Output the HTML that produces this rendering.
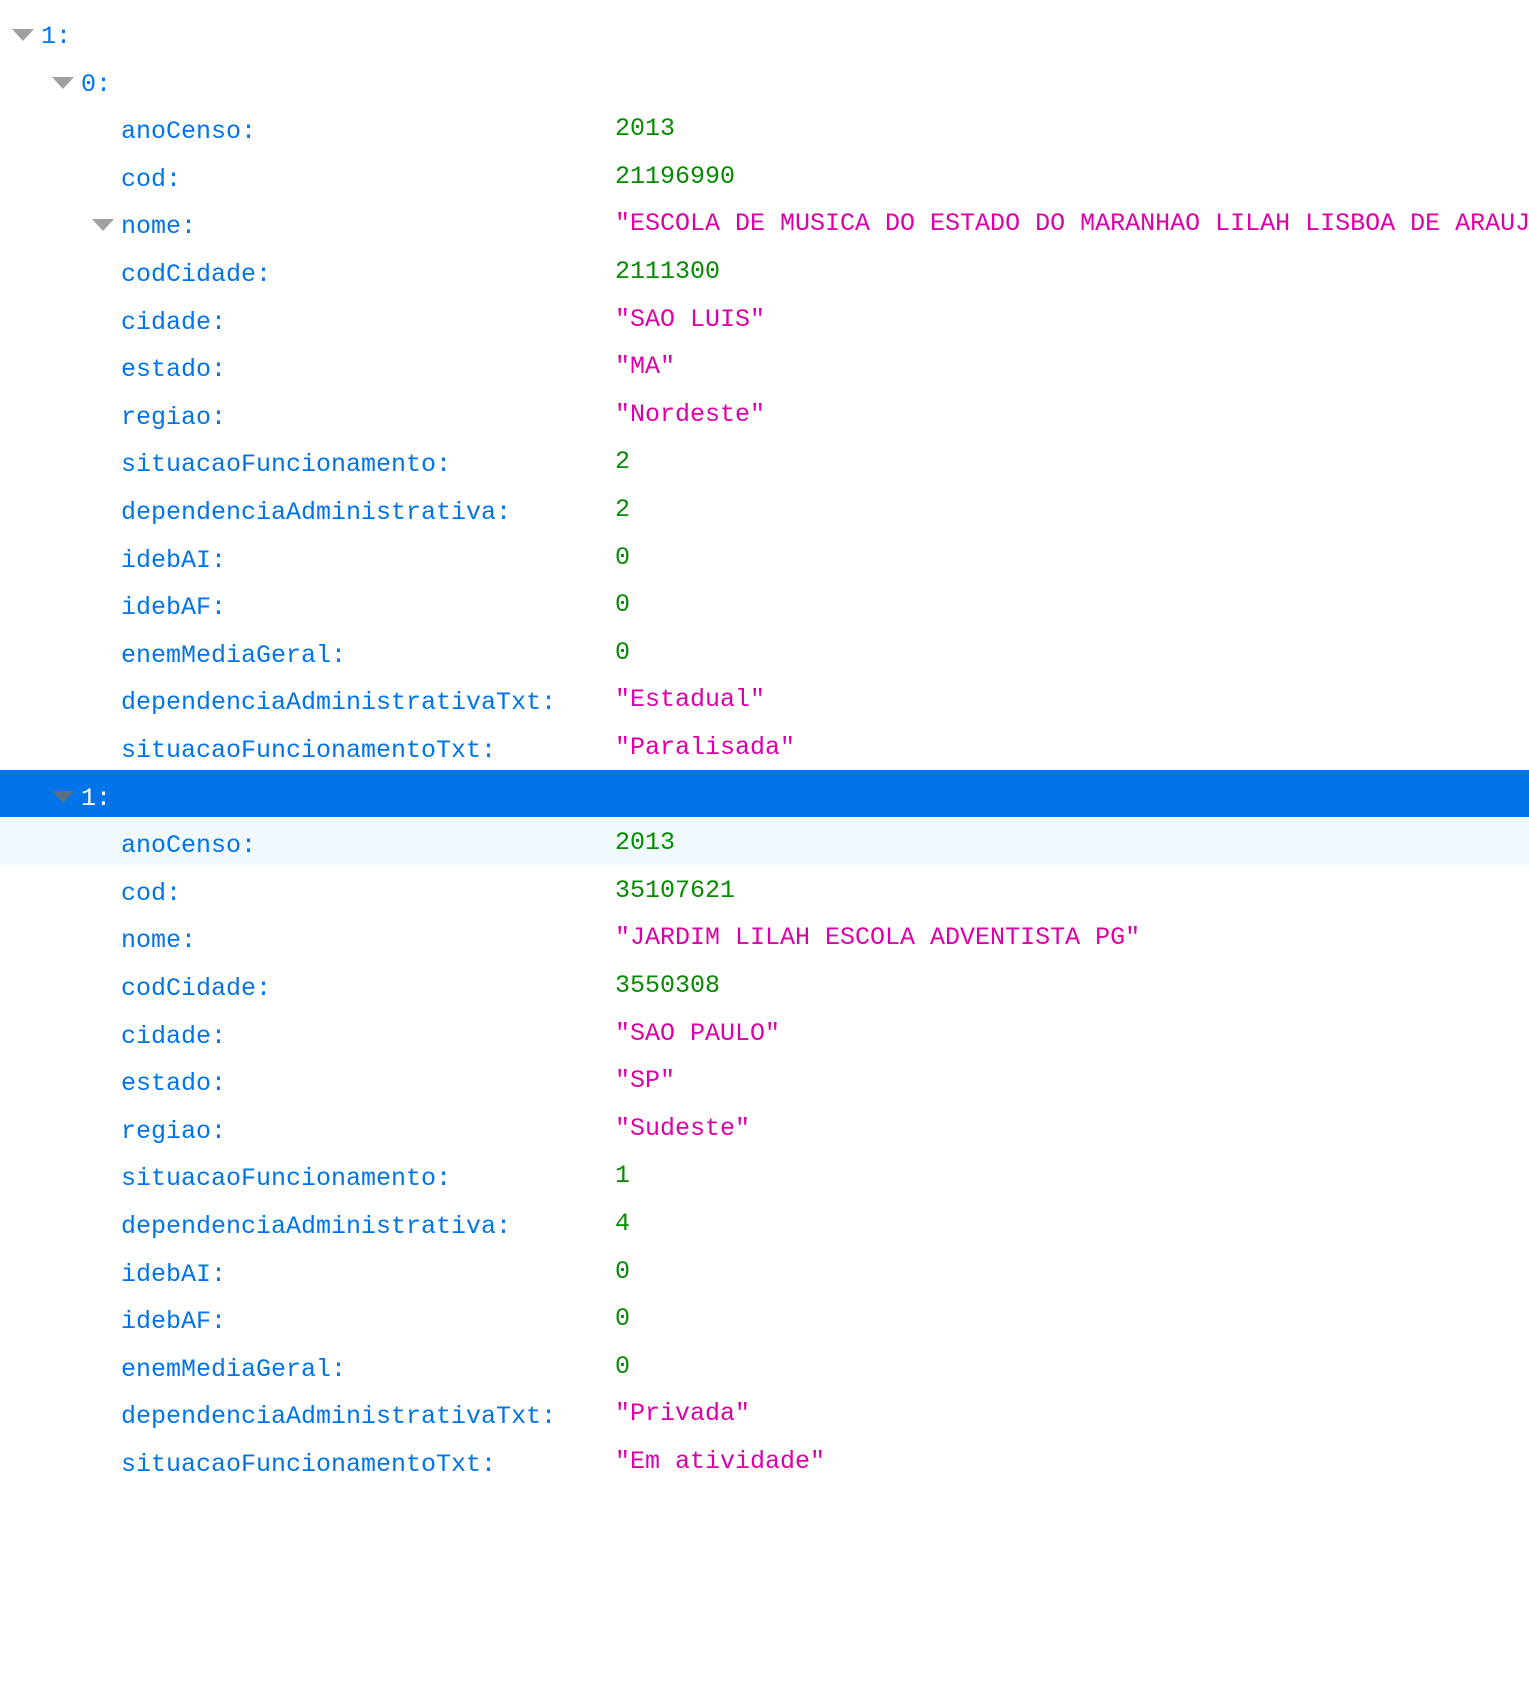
<!DOCTYPE html>
<html><head><meta charset="utf-8"><style>
html,body{margin:0;padding:0;background:#fff;width:1529px;height:1684px;overflow:hidden}
.r{position:absolute;left:0;width:1529px;height:47.6px;line-height:57px;font-family:"Liberation Mono",monospace;font-size:25px;white-space:nowrap;overflow:hidden}
.k{position:absolute;color:#0074e8}
.v{position:absolute;left:615px;top:-3px}
.n{color:#058b00}.s{color:#dd00a9}
.t{position:absolute;width:0;height:0;border-left:11px solid transparent;border-right:11px solid transparent;border-top:12px solid #a0a0a0;top:21px}
.sel{background:#0074e8}.sel .k{color:#fff}.sel .t{border-top-color:#5a7184}
.hov{background:#f0f9fe}
</style></head><body>
<div class="r" style="top:8px"><span class="t" style="left:12px"></span><span class="k" style="left:41px">1:</span></div>
<div class="r" style="top:55.6px"><span class="t" style="left:52px"></span><span class="k" style="left:81px">0:</span></div>
<div class="r" style="top:103.2px"><span class="k" style="left:121px">anoCenso:</span><span class="v n">2013</span></div>
<div class="r" style="top:150.8px"><span class="k" style="left:121px">cod:</span><span class="v n">21196990</span></div>
<div class="r" style="top:198.4px"><span class="t" style="left:92px"></span><span class="k" style="left:121px">nome:</span><span class="v s">"ESCOLA DE MUSICA DO ESTADO DO MARANHAO LILAH LISBOA DE ARAUJO"</span></div>
<div class="r" style="top:246px"><span class="k" style="left:121px">codCidade:</span><span class="v n">2111300</span></div>
<div class="r" style="top:293.6px"><span class="k" style="left:121px">cidade:</span><span class="v s">"SAO LUIS"</span></div>
<div class="r" style="top:341.2px"><span class="k" style="left:121px">estado:</span><span class="v s">"MA"</span></div>
<div class="r" style="top:388.8px"><span class="k" style="left:121px">regiao:</span><span class="v s">"Nordeste"</span></div>
<div class="r" style="top:436.4px"><span class="k" style="left:121px">situacaoFuncionamento:</span><span class="v n">2</span></div>
<div class="r" style="top:484px"><span class="k" style="left:121px">dependenciaAdministrativa:</span><span class="v n">2</span></div>
<div class="r" style="top:531.6px"><span class="k" style="left:121px">idebAI:</span><span class="v n">0</span></div>
<div class="r" style="top:579.2px"><span class="k" style="left:121px">idebAF:</span><span class="v n">0</span></div>
<div class="r" style="top:626.8px"><span class="k" style="left:121px">enemMediaGeral:</span><span class="v n">0</span></div>
<div class="r" style="top:674.4px"><span class="k" style="left:121px">dependenciaAdministrativaTxt:</span><span class="v s">"Estadual"</span></div>
<div class="r" style="top:722px"><span class="k" style="left:121px">situacaoFuncionamentoTxt:</span><span class="v s">"Paralisada"</span></div>
<div class="r sel" style="top:769.6px"><span class="t" style="left:52px"></span><span class="k" style="left:81px">1:</span></div>
<div class="r hov" style="top:817.2px"><span class="k" style="left:121px">anoCenso:</span><span class="v n">2013</span></div>
<div class="r" style="top:864.8px"><span class="k" style="left:121px">cod:</span><span class="v n">35107621</span></div>
<div class="r" style="top:912.4px"><span class="k" style="left:121px">nome:</span><span class="v s">"JARDIM LILAH ESCOLA ADVENTISTA PG"</span></div>
<div class="r" style="top:960px"><span class="k" style="left:121px">codCidade:</span><span class="v n">3550308</span></div>
<div class="r" style="top:1007.6px"><span class="k" style="left:121px">cidade:</span><span class="v s">"SAO PAULO"</span></div>
<div class="r" style="top:1055.2px"><span class="k" style="left:121px">estado:</span><span class="v s">"SP"</span></div>
<div class="r" style="top:1102.8px"><span class="k" style="left:121px">regiao:</span><span class="v s">"Sudeste"</span></div>
<div class="r" style="top:1150.4px"><span class="k" style="left:121px">situacaoFuncionamento:</span><span class="v n">1</span></div>
<div class="r" style="top:1198px"><span class="k" style="left:121px">dependenciaAdministrativa:</span><span class="v n">4</span></div>
<div class="r" style="top:1245.6px"><span class="k" style="left:121px">idebAI:</span><span class="v n">0</span></div>
<div class="r" style="top:1293.2px"><span class="k" style="left:121px">idebAF:</span><span class="v n">0</span></div>
<div class="r" style="top:1340.8px"><span class="k" style="left:121px">enemMediaGeral:</span><span class="v n">0</span></div>
<div class="r" style="top:1388.4px"><span class="k" style="left:121px">dependenciaAdministrativaTxt:</span><span class="v s">"Privada"</span></div>
<div class="r" style="top:1436px"><span class="k" style="left:121px">situacaoFuncionamentoTxt:</span><span class="v s">"Em atividade"</span></div>
</body></html>
